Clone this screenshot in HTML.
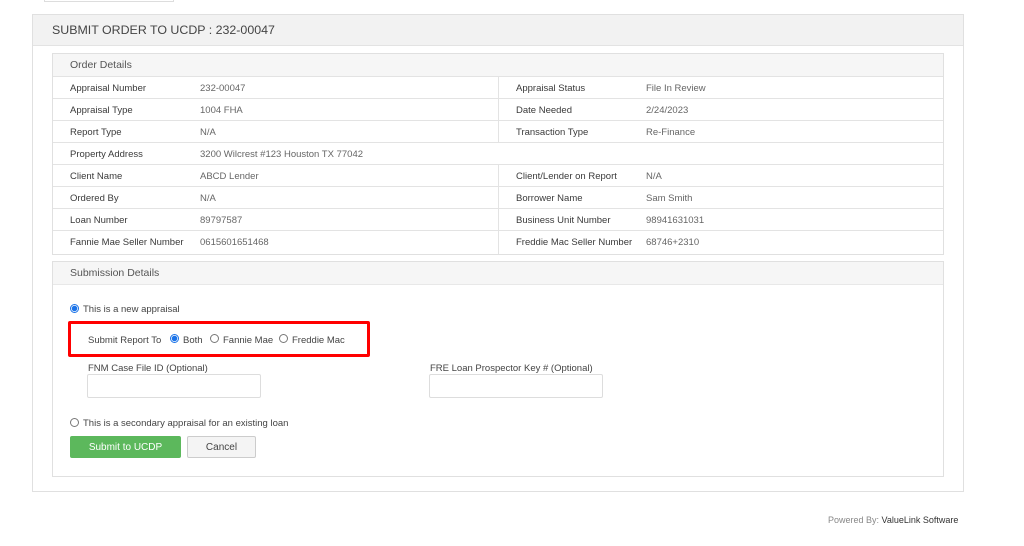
<!DOCTYPE html>
<html><head><style>
*{margin:0;padding:0;box-sizing:border-box}
body{width:1024px;height:546px;background:#fff;font-family:"Liberation Sans",sans-serif;color:#444;position:relative;overflow:hidden}
.a{position:absolute}
.t{font-size:9.5px;white-space:nowrap}
.v{color:#666}
.row{position:absolute;left:53px;width:890px;height:22px;border-top:1px solid #e3e3e3}
.row span{position:absolute;top:6px;font-size:9.5px;white-space:nowrap;color:#3a3a3a}
.row span.v{color:#666}
.rad{position:absolute;width:9px;height:9px;border:1px solid #777;border-radius:50%;background:#fff}
.rad.on{border-color:#1a73e8;background:radial-gradient(circle,#1a73e8 0 2.5px,#fff 3px)}
</style></head><body>
<div class="a" style="left:44px;top:0;width:130px;height:2px;border:1px solid #ddd;border-top:0"></div>
<div class="a" style="left:32px;top:14px;width:932px;height:478px;border:1px solid #e0e0e0"></div>
<div class="a" style="left:33px;top:15px;width:930px;height:31px;background:#f2f2f2;border-bottom:1px solid #e3e3e3"></div>
<div class="a" style="left:52px;top:23px;font-size:12.4px;color:#444">SUBMIT ORDER TO UCDP : 232-00047</div>

<div class="a" style="left:52px;top:53px;width:892px;height:202px;border:1px solid #e0e0e0"></div>
<div class="a" style="left:53px;top:54px;width:890px;height:22px;background:#f6f6f6"></div>
<div class="a" style="left:70px;top:59px;font-size:10.5px;color:#555">Order Details</div>
<div class="a" style="left:498px;top:76px;width:1px;height:178px;background:#e3e3e3"></div>
<div class="row" style="top:76px"><span style="left:17px">Appraisal Number</span><span class="v" style="left:147px">232-00047</span><span style="left:463px">Appraisal Status</span><span class="v" style="left:593px">File In Review</span></div>
<div class="row" style="top:98px"><span style="left:17px">Appraisal Type</span><span class="v" style="left:147px">1004 FHA</span><span style="left:463px">Date Needed</span><span class="v" style="left:593px">2/24/2023</span></div>
<div class="row" style="top:120px"><span style="left:17px">Report Type</span><span class="v" style="left:147px">N/A</span><span style="left:463px">Transaction Type</span><span class="v" style="left:593px">Re-Finance</span></div>
<div class="row" style="top:142px;background:#fff"><span style="left:17px">Property Address</span><span class="v" style="left:147px">3200 Wilcrest #123 Houston TX 77042</span></div>
<div class="a" style="left:498px;top:143px;width:1px;height:21px;background:#fff"></div>
<div class="row" style="top:164px"><span style="left:17px">Client Name</span><span class="v" style="left:147px">ABCD Lender</span><span style="left:463px">Client/Lender on Report</span><span class="v" style="left:593px">N/A</span></div>
<div class="row" style="top:186px"><span style="left:17px">Ordered By</span><span class="v" style="left:147px">N/A</span><span style="left:463px">Borrower Name</span><span class="v" style="left:593px">Sam Smith</span></div>
<div class="row" style="top:208px"><span style="left:17px">Loan Number</span><span class="v" style="left:147px">89797587</span><span style="left:463px">Business Unit Number</span><span class="v" style="left:593px">98941631031</span></div>
<div class="row" style="top:230px"><span style="left:17px">Fannie Mae Seller Number</span><span class="v" style="left:147px">0615601651468</span><span style="left:463px">Freddie Mac Seller Number</span><span class="v" style="left:593px">68746+2310</span></div>

<div class="a" style="left:52px;top:261px;width:892px;height:216px;border:1px solid #e0e0e0"></div>
<div class="a" style="left:53px;top:262px;width:890px;height:23px;background:#f6f6f6;border-bottom:1px solid #e8e8e8"></div>
<div class="a" style="left:70px;top:267px;font-size:10.5px;color:#555">Submission Details</div>

<div class="rad on" style="left:70px;top:304px"></div>
<div class="a t" style="left:83px;top:304px">This is a new appraisal</div>
<div class="a" style="left:68px;top:321px;width:302px;height:36px;border:3px solid #f00;border-radius:2px"></div>
<div class="a t" style="left:88px;top:335px">Submit Report To</div>
<div class="rad on" style="left:170px;top:334px"></div>
<div class="a t" style="left:183px;top:335px">Both</div>
<div class="rad" style="left:210px;top:334px"></div>
<div class="a t" style="left:223px;top:335px">Fannie Mae</div>
<div class="rad" style="left:279px;top:334px"></div>
<div class="a t" style="left:292px;top:335px">Freddie Mac</div>

<div class="a t" style="left:88px;top:363px">FNM Case File ID (Optional)</div>
<div class="a" style="left:87px;top:374px;width:174px;height:24px;border:1px solid #ddd;border-radius:2px"></div>
<div class="a t" style="left:430px;top:363px">FRE Loan Prospector Key # (Optional)</div>
<div class="a" style="left:429px;top:374px;width:174px;height:24px;border:1px solid #ddd;border-radius:2px"></div>

<div class="rad" style="left:70px;top:418px"></div>
<div class="a t" style="left:83px;top:418px">This is a secondary appraisal for an existing loan</div>
<div class="a" style="left:70px;top:436px;width:111px;height:22px;background:#5cb85c;border-radius:2px;color:#fff;font-size:10px;text-align:center;line-height:23px">Submit to UCDP</div>
<div class="a" style="left:187px;top:436px;width:69px;height:22px;background:#f4f4f4;border:1px solid #ccc;border-radius:2px;color:#444;font-size:10px;text-align:center;line-height:21px">Cancel</div>

<div class="a" style="left:828px;top:515px;font-size:9px;color:#888;white-space:nowrap">Powered By: <span style="color:#333">ValueLink Software</span></div>
</body></html>
